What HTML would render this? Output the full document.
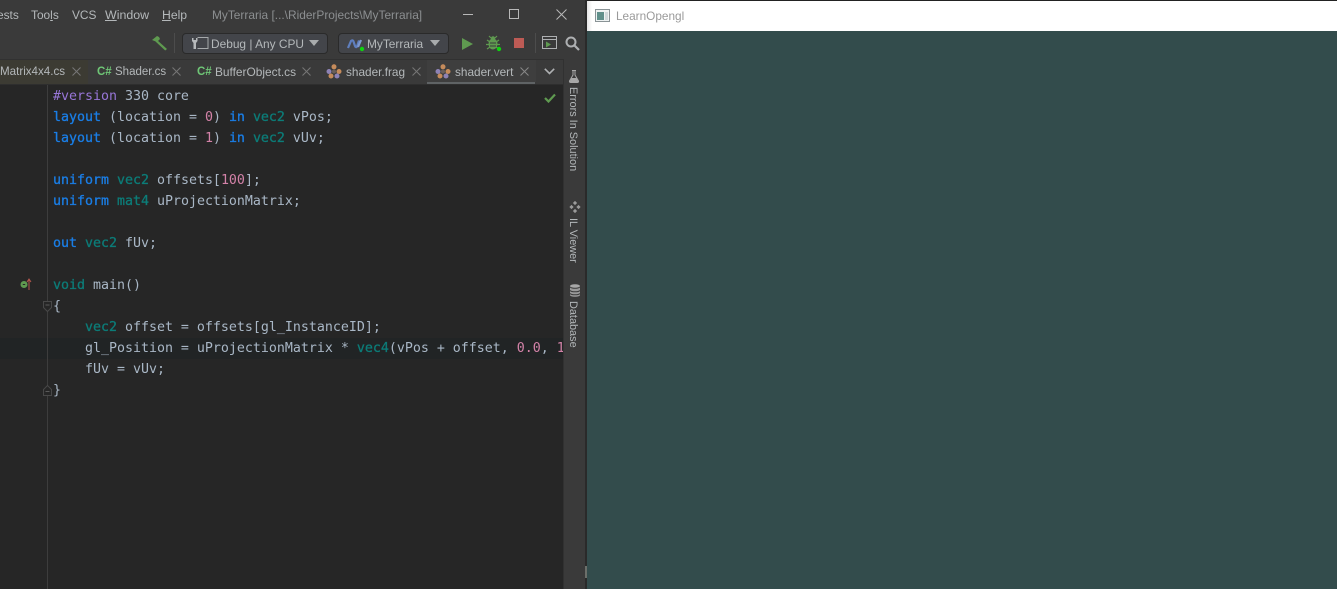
<!DOCTYPE html>
<html><head><meta charset="utf-8">
<style>
html,body{margin:0;padding:0;width:1337px;height:589px;overflow:hidden;background:#262626}
*{box-sizing:border-box}
.a{position:absolute;white-space:pre}
.u{font-family:"Liberation Sans",sans-serif;font-size:11.9px;color:#b4b8ba;line-height:16px}
.c{position:absolute;left:53px;font-family:"DejaVu Sans Mono",monospace;font-size:13.29px;line-height:21px;height:21px;color:#a9b7c6;white-space:pre}
.k{color:#1a7ee6;-webkit-text-stroke:.3px #1a7ee6}.t{color:#0c7c78;-webkit-text-stroke:.3px #0c7c78}.n{color:#d382a8}.p{color:#9876d8}
.x{position:absolute;width:9px;height:9px}
.v{position:absolute;font-family:"Liberation Sans",sans-serif;font-size:10.9px;color:#b4b8ba;transform-origin:0 0;transform:rotate(90deg);white-space:pre;line-height:14px}
</style></head><body>
<!-- IDE backgrounds -->
<div class="a" style="left:0;top:0;width:587px;height:85px;background:#3a3a3a"></div>
<div class="a" style="left:0;top:59px;width:563px;height:1px;background:#313131"></div>
<div class="a" style="left:0;top:0;width:88px;height:59px;background:#3a3a3a"></div>
<div class="a" style="left:0;top:60px;width:88px;height:24px;background:#3c3b33"></div>
<div class="a" style="left:427px;top:60px;width:109px;height:22px;background:#3e3e3e"></div>
<div class="a" style="left:427px;top:82px;width:108px;height:3px;background:#5f6365"></div>
<div class="a" style="left:0;top:84px;width:563px;height:1px;background:#2e2e2e"></div>
<div class="a" style="left:0;top:85px;width:563px;height:504px;background:#262626"></div>
<div class="a" style="left:0;top:338px;width:563px;height:21px;background:#212425"></div>
<div class="a" style="left:47px;top:85px;width:1px;height:504px;background:#3d3d3d"></div>
<div class="a" style="left:563px;top:59px;width:23px;height:530px;background:#3a3a3a;border-left:1px solid #313131"></div>
<div class="a" style="left:585px;top:0;width:2px;height:589px;background:#2a2a2a"></div>
<!-- Right window -->
<div class="a" style="left:587px;top:0;width:750px;height:589px;background:#334c4c"></div>
<div class="a" style="left:587px;top:0;width:750px;height:1px;background:#222"></div>
<div class="a" style="left:587px;top:1px;width:750px;height:30px;background:#fff"></div>
<div class="a" style="left:587px;top:1px;width:5px;height:30px;background:linear-gradient(90deg,#e4e4e4,#fff)"></div>
<svg class="a" style="left:595px;top:9px" width="16" height="14"><rect x=".5" y=".5" width="14" height="12" fill="#eef2f2" stroke="#8a9396"/><rect x="2" y="3" width="7" height="8" fill="#5f8f8a"/><rect x="10" y="3" width="3" height="8" fill="#cfd8da"/></svg>
<div class="a" style="left:616px;top:8px;font:11.8px/16px 'Liberation Sans',sans-serif;color:#9a9a9a">LearnOpengl</div>
<!-- Menu -->
<div class="a u" style="left:-3px;top:7px">ests</div>
<div class="a u" style="left:31px;top:7px">Too<span style="text-decoration:underline">l</span>s</div>
<div class="a u" style="left:72px;top:7px">VCS</div>
<div class="a u" style="left:105px;top:7px;font-size:12.4px"><span style="text-decoration:underline">W</span>indow</div>
<div class="a u" style="left:162px;top:7px;font-size:12.2px"><span style="text-decoration:underline">H</span>elp</div>
<div class="a u" style="left:212px;top:7px;color:#8c8f91">MyTerraria [...\RiderProjects\MyTerraria]</div>
<!-- Window controls -->
<div class="a" style="left:463px;top:14px;width:10px;height:1px;background:#b8b8b8"></div>
<div class="a" style="left:509px;top:9px;width:10px;height:10px;border:1px solid #b8b8b8"></div>
<svg class="a" style="left:556px;top:9px" width="11" height="11"><path d="M.5.5l10 10M10.500.5l-10 10" stroke="#b8b8b8" fill="none"/></svg>
<!-- Toolbar -->
<svg class="a" style="left:151px;top:35px" width="17" height="16"><path d="M1 5L6 1l2 1 1 2-3 3z" fill="#5f9a50"/><path d="M6 5l10 9-1.800 1.500L4.500 6.500z" fill="#5f9a50"/></svg>
<div class="a" style="left:174px;top:33px;width:1px;height:20px;background:#4c4c4c"></div>
<div class="a" style="left:182px;top:33px;width:146px;height:21px;border:1px solid #2a2a2a;border-radius:4px;background:#43454a"></div>
<svg class="a" style="left:191px;top:36px" width="18" height="15"><path d="M6.500 1.500H17v11H6.500" fill="none" stroke="#a6a9ab"/><path d="M1 2v3l1.500 2v6h2.500V7L6.500 5V2L5 2v2H2.500V2z" fill="#b6b9bb"/></svg>
<div class="a u" style="left:211px;top:36px">Debug | Any CPU</div>
<svg class="a" style="left:309px;top:40px" width="10" height="6"><path d="M0 0h10L5 6z" fill="#a8abad"/></svg>
<div class="a" style="left:338px;top:33px;width:111px;height:21px;border:1px solid #2a2a2a;border-radius:4px;background:#43454a"></div>
<svg class="a" style="left:347px;top:38px" width="19" height="14"><path d="M1 10L4 3c1-1 2-1 2.500.5L8 8c.5 1.500 1.500 1.500 2 .5l2-6" fill="none" stroke="#5f7fbe" stroke-width="2.200"/><path d="M11 9l3-7" stroke="#7f98cc" stroke-width="2.200"/><circle cx="15" cy="11" r="2.200" fill="#0fd30f"/></svg>
<div class="a u" style="left:367px;top:36px">MyTerraria</div>
<svg class="a" style="left:430px;top:40px" width="10" height="6"><path d="M0 0h10L5 6z" fill="#a8abad"/></svg>
<svg class="a" style="left:462px;top:38px" width="12" height="12"><path d="M0 0l11 6L0 12z" fill="#5f9a50"/></svg>
<svg class="a" style="left:486px;top:35px" width="16" height="17"><ellipse cx="7" cy="9" rx="4.500" ry="5.500" fill="#5f9a50"/><circle cx="7" cy="3.500" r="2.200" fill="#5f9a50"/><path d="M1 5l3 2M13 5l-3 2M0 9.500h3M11 9.500h3M1 14l3-2M13 14l-3-2M3 1l2 2M11 1L9 3" stroke="#5f9a50" stroke-width="1.200"/><path d="M4 8h6M4 11h6" stroke="#3a3a3a"/><circle cx="13" cy="14" r="2.200" fill="#0fd30f"/></svg>
<div class="a" style="left:514px;top:38px;width:10px;height:10px;background:#bd5b55"></div>
<div class="a" style="left:535px;top:33px;width:1px;height:20px;background:#4c4c4c"></div>
<svg class="a" style="left:542px;top:36px" width="16" height="14"><rect x=".5" y=".5" width="14" height="12" fill="none" stroke="#aeb0b2"/><path d="M.5 3.500h14" stroke="#aeb0b2"/><path d="M4 5.500l5 3-5 3z" fill="#5f9a50"/></svg>
<svg class="a" style="left:565px;top:36px" width="15" height="15"><circle cx="6" cy="6" r="4.500" fill="none" stroke="#aeb0b2" stroke-width="2"/><path d="M9.500 9.500l4.500 4.500" stroke="#aeb0b2" stroke-width="2.200"/></svg>
<!-- Tabs -->
<div class="a u" style="left:0;top:64px;font-size:11.6px">Matrix4x4.cs</div>
<svg class="x" style="left:72px;top:67px"><path d="M.5.500l8 8M8.500.500l-8 8" stroke="#777" fill="none"/></svg>
<div class="a u" style="left:97px;top:64px;color:#6fc777;font-weight:bold;font-size:11.5px">C#</div>
<div class="a u" style="left:115px;top:64px;font-size:11.5px">Shader.cs</div>
<svg class="x" style="left:172px;top:67px"><path d="M.5.500l8 8M8.500.500l-8 8" stroke="#777" fill="none"/></svg>
<div class="a u" style="left:197px;top:64px;color:#6fc777;font-weight:bold;font-size:11.5px">C#</div>
<div class="a u" style="left:215px;top:64px">BufferObject.cs</div>
<svg class="x" style="left:302px;top:67px"><path d="M.5.500l8 8M8.500.500l-8 8" stroke="#777" fill="none"/></svg>
<svg class="a" style="left:326px;top:64px" width="16" height="15"><g fill="#c58b5b"><circle cx="8" cy="2.800" r="2.500"/><circle cx="3" cy="7.500" r="2.500" fill="#8d82b5"/><circle cx="13" cy="7.500" r="2.500"/><circle cx="5" cy="12" r="2.500"/><circle cx="11" cy="12" r="2.500" fill="#8d82b5"/></g><circle cx="8" cy="7.500" r="2" fill="#6b5f5a"/></svg>
<div class="a u" style="left:346px;top:64px;font-size:11.8px">shader.frag</div>
<svg class="x" style="left:412px;top:67px"><path d="M.5.500l8 8M8.500.500l-8 8" stroke="#777" fill="none"/></svg>
<svg class="a" style="left:435px;top:64px" width="16" height="15"><g fill="#c58b5b"><circle cx="8" cy="2.800" r="2.500"/><circle cx="3" cy="7.500" r="2.500" fill="#8d82b5"/><circle cx="13" cy="7.500" r="2.500"/><circle cx="5" cy="12" r="2.500"/><circle cx="11" cy="12" r="2.500" fill="#8d82b5"/></g><circle cx="8" cy="7.500" r="2" fill="#6b5f5a"/></svg>
<div class="a u" style="left:455px;top:64px;font-size:11.8px">shader.vert</div>
<svg class="x" style="left:520px;top:67px"><path d="M.5.500l8 8M8.500.500l-8 8" stroke="#888" fill="none"/></svg>
<svg class="a" style="left:544px;top:68px" width="11" height="7"><path d="M.8.800L5.500 5.500 10.200.8" fill="none" stroke="#aeb0b2" stroke-width="1.600"/></svg>
<svg class="a" style="left:544px;top:93px" width="12" height="10"><path d="M1 5l3.500 3.500L11 1.500" fill="none" stroke="#5f9a50" stroke-width="2.200"/></svg>
<!-- Code -->
<div class="c" style="top:86px"><span class="p">#version</span> 330 core</div>
<div class="c" style="top:107px"><span class="k">layout</span> (location = <span class="n">0</span>) <span class="k">in</span> <span class="t">vec2</span> vPos;</div>
<div class="c" style="top:128px"><span class="k">layout</span> (location = <span class="n">1</span>) <span class="k">in</span> <span class="t">vec2</span> vUv;</div>
<div class="c" style="top:170px"><span class="k">uniform</span> <span class="t">vec2</span> offsets[<span class="n">100</span>];</div>
<div class="c" style="top:191px"><span class="k">uniform</span> <span class="t">mat4</span> uProjectionMatrix;</div>
<div class="c" style="top:233px"><span class="k">out</span> <span class="t">vec2</span> fUv;</div>
<div class="c" style="top:275px"><span class="t">void</span> main()</div>
<div class="c" style="top:296px">{</div>
<div class="c" style="top:317px">    <span class="t">vec2</span> offset = offsets[gl_InstanceID];</div>
<div class="c" style="top:338px;width:510px;overflow:hidden">    gl_Position = uProjectionMatrix * <span class="t">vec4</span>(vPos + offset, <span class="n">0.0</span>, <span class="n">1</span></div>
<div class="c" style="top:359px">    fUv = vUv;</div>
<div class="c" style="top:380px">}</div>
<!-- Gutter icons -->
<svg class="a" style="left:19px;top:278px" width="14" height="13"><circle cx="5" cy="6.500" r="3.500" fill="#5f9a50"/><path d="M3.800 6.500h2.400" stroke="#262626"/><path d="M10 12V2M8 4l2-3 2 3" stroke="#b5574e" fill="none"/></svg>
<svg class="a" style="left:43px;top:301px" width="10" height="12"><path d="M.5.500h8v6l-4 4-4-4z" fill="#262626" stroke="#484848"/><path d="M2.500 4h4" stroke="#5a5a5a"/></svg>
<svg class="a" style="left:43px;top:384px" width="10" height="12"><path d="M.5 11.500h8v-6l-4-4-4 4z" fill="#262626" stroke="#484848"/><path d="M2.500 7.500h4" stroke="#5a5a5a"/></svg>
<!-- Side bar -->
<svg class="a" style="left:568px;top:70px" width="12" height="13"><path d="M4 .5h4M5 1v4L1.500 11c-.3 1 .2 1.500 1 1.500h7c.8 0 1.300-.5 1-1.500L7 5V1" fill="none" stroke="#a8a8a8"/><path d="M3.500 8h5l2 4h-9z" fill="#a8a8a8"/></svg>
<div class="v" style="left:580px;top:87px">Errors In Solution</div>
<svg class="a" style="left:569px;top:201px" width="12" height="12"><g fill="#9a9a9a"><rect x="4.500" y="0.500" width="3" height="3" transform="rotate(45 6 2)"/><rect x="1" y="4.500" width="3" height="3" transform="rotate(45 2.500 6)"/><rect x="8" y="4.500" width="3" height="3" transform="rotate(45 9.500 6)"/><rect x="4.500" y="8.500" width="3" height="3" transform="rotate(45 6 10)"/></g></svg>
<div class="v" style="left:580px;top:218px">IL Viewer</div>
<svg class="a" style="left:569px;top:284px" width="12" height="13"><ellipse cx="6" cy="2" rx="5" ry="1.800" fill="#a8a8a8"/><path d="M1 3.500v7.500c0 1 2 1.800 5 1.800s5-.8 5-1.800V3.500c-1 1-3 1.300-5 1.300S2 4.500 1 3.500z" fill="#9a9a9a"/><path d="M1 6.500c1 1 3 1.300 5 1.300s4-.3 5-1.300M1 9.500c1 1 3 1.300 5 1.300s4-.3 5-1.300" fill="none" stroke="#3a3a3a"/></svg>
<div class="v" style="left:580px;top:301px">Database</div>
<div class="a" style="left:585px;top:566px;width:2px;height:12px;background:#6c6f6a"></div>
</body></html>
